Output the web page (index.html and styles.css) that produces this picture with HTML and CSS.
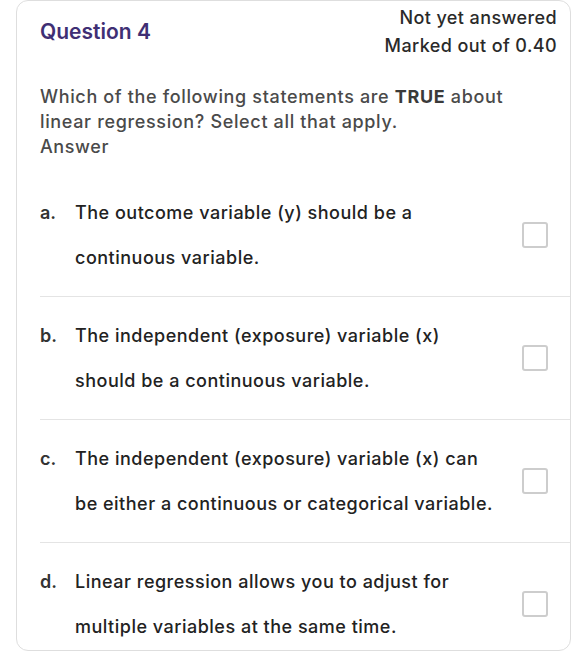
FILE: index.html
```html
<!DOCTYPE html>
<html lang="en">
<head>
<meta charset="utf-8">
<title>Question 4</title>
<link rel="stylesheet" href="styles.css">
</head>
<body>
<div class="card">
  <div class="header">
    <h3 class="qno">Question 4</h3>
    <div class="state">
      <div>Not yet answered</div>
      <div>Marked out of 0.40</div>
    </div>
  </div>
  <div class="qtext">Which of the following statements are <strong>TRUE</strong> about linear regression? Select all that apply.</div>
  <div class="prompt">Answer</div>
  <div class="answers">
    <div class="option">
      <span class="letter">a.</span>
      <span class="otext">The outcome variable (y) should be a continuous variable.</span>
      <span class="box"></span>
    </div>
    <div class="option">
      <span class="letter">b.</span>
      <span class="otext">The independent (exposure) variable (x) should be a continuous variable.</span>
      <span class="box"></span>
    </div>
    <div class="option">
      <span class="letter">c.</span>
      <span class="otext">The independent (exposure) variable (x) can be either a continuous or categorical variable.</span>
      <span class="box"></span>
    </div>
    <div class="option">
      <span class="letter">d.</span>
      <span class="otext">Linear regression allows you to adjust for multiple variables at the same time.</span>
      <span class="box"></span>
    </div>
  </div>
</div>
</body>
</html>
```
FILE: styles.css
```css
html, body {
  margin: 0;
  padding: 0;
  background: #fff;
}
body {
  font-family: Inter, "Liberation Sans", sans-serif;
  color: #222;
  width: 588px;
  height: 654px;
  overflow: hidden;
}
.card {
  margin: 0 17px 0 16px;
  border: 1px solid #dedede;
  border-radius: 12px;
  padding: 3px 0 0 23px;
  height: 651px;
  box-sizing: border-box;
  overflow: hidden;
}
.header {
  display: flex;
  justify-content: space-between;
  align-items: flex-start;
  padding-right: 13px;
}
.qno {
  margin: 14px 0 0 0;
  font-size: 21px;
  font-weight: 600;
  color: #3f2f74;
  line-height: 28px;
}
.state {
  text-align: right;
  font-size: 18px;
  font-weight: 500;
  letter-spacing: 0.4px;
  line-height: 28px;
  color: #2a2a2a;
}
.qtext {
  margin-top: 24px;
  padding-right: 40px;
  font-size: 18px;
  letter-spacing: 0.65px;
  line-height: 25px;
  color: #4a4a4a;
  font-weight: 450;
}
.qtext strong {
  font-weight: 700;
  color: #3a3a3a;
}
.prompt {
  font-size: 18px;
  letter-spacing: 0.6px;
  line-height: 26px;
  color: #4a4a4a;
  font-weight: 450;
}
.answers {
  margin-top: 14px;
}
.option {
  display: flex;
  align-items: center;
  padding: 16px 0;
  border-bottom: 1px solid #e4e4e4;
}
.option:last-child {
  border-bottom: none;
}
.letter {
  align-self: flex-start;
  width: 35px;
  flex: none;
  font-size: 18px;
  font-weight: 600;
  line-height: 45px;
  color: #333;
}
.otext {
  flex: 1;
  font-size: 18px;
  font-weight: 500;
  letter-spacing: 0.5px;
  line-height: 45px;
  color: #222;
}
.box {
  flex: none;
  width: 22px;
  height: 22px;
  border: 2px solid #cdcdcd;
  border-radius: 3px;
  margin: 0 22px 0 25px;
}
```
